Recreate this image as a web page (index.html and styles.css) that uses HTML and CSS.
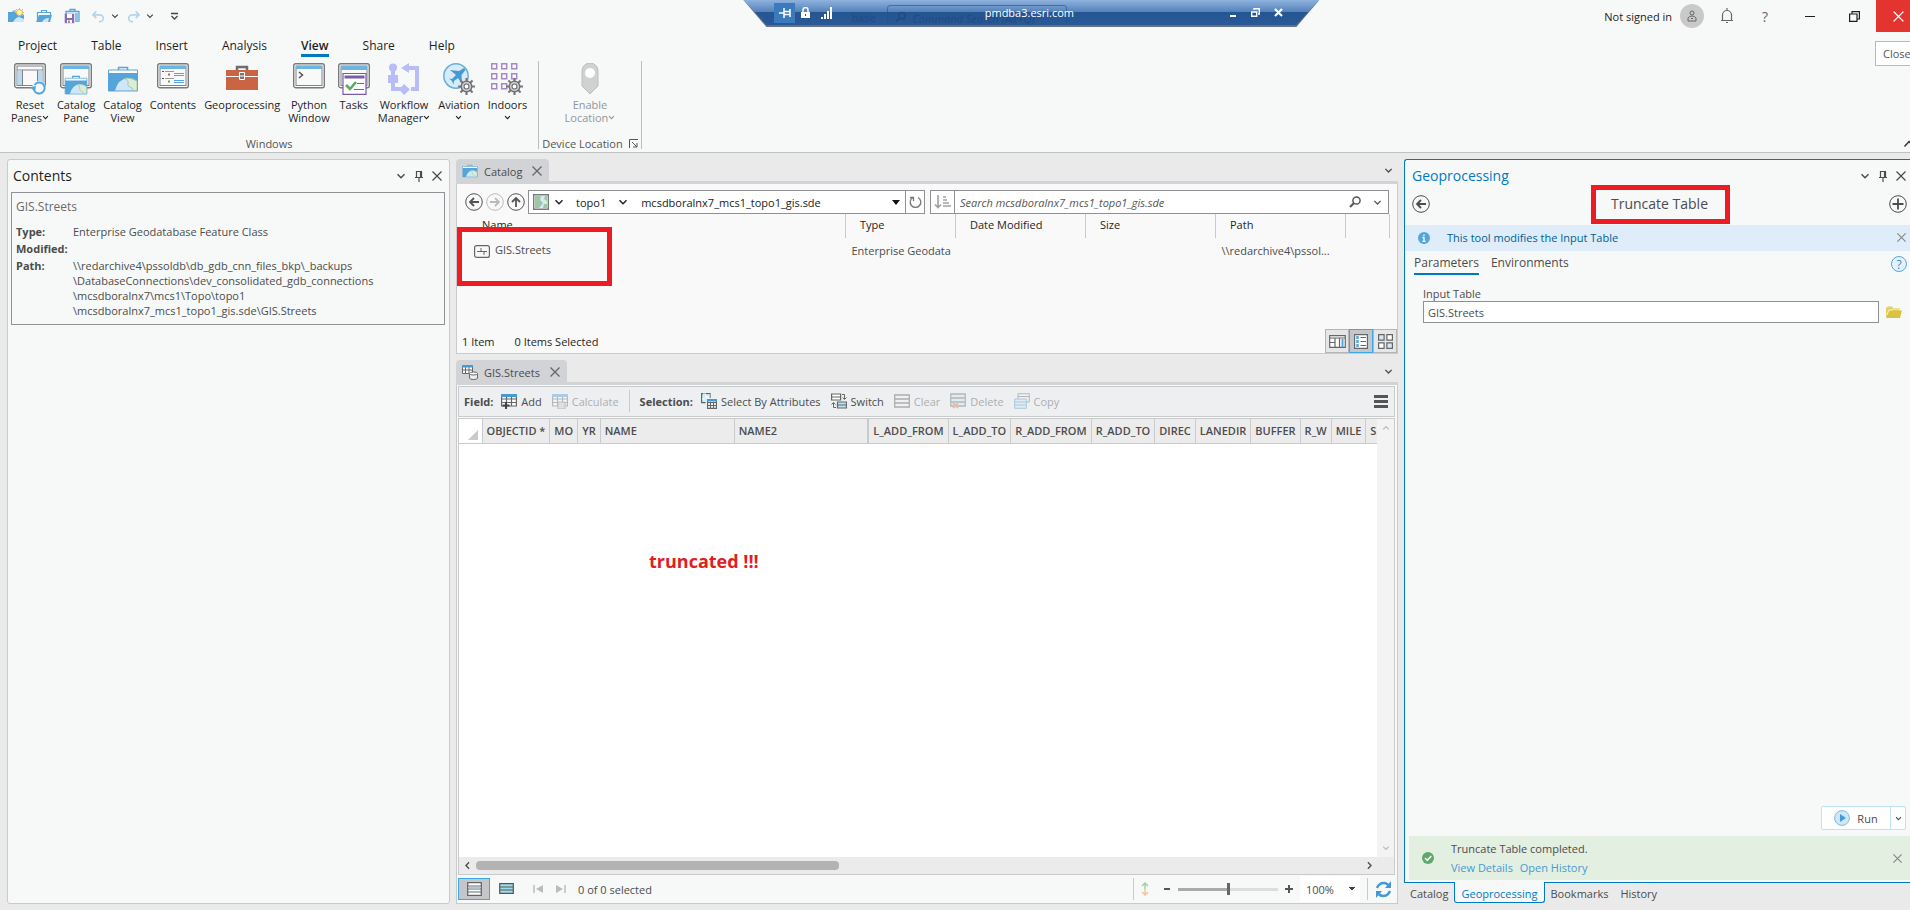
FILE: index.html
```html
<!DOCTYPE html>
<html lang="en">
<head>
    <meta charset="UTF-8">
    <meta name="viewport" content="width=device-width, initial-scale=1.0">
    <title>ArcGIS Pro - Truncate Table</title>
    <link rel="stylesheet" href="styles.css">
</head>
<body>
    <!-- Shared icons -->
    <svg class="sprite" aria-hidden="true">
        <symbol id="chevron" viewBox="0 0 10 10"><path d="M1.5 3.2 5 6.7 8.500 3.200" fill="none" stroke="currentColor" stroke-width="1.5"/></symbol>
        <symbol id="cross" viewBox="0 0 12 12"><path d="M1.500 1.500 10.500 10.500M10.500 1.500 1.500 10.500" fill="none" stroke="currentColor" stroke-width="1.300"/></symbol>
        <symbol id="pin" viewBox="0 0 12 12"><path d="M3.500 7V1.500h5V7M2 7.500h8M6 7.500V12M7.500 1.500V7" fill="none" stroke="currentColor" stroke-width="1.200"/></symbol>
        <symbol id="circle-left" viewBox="0 0 18 18"><circle cx="9" cy="9" r="8.300" fill="none" stroke="currentColor"/><path d="M14 9H5M9 5 5 9l4 4" fill="none" stroke="currentColor" stroke-width="1.800"/></symbol>
        <symbol id="case" viewBox="0 0 32 26"><path d="M11.500 4V1.500h9V4" fill="none" stroke="#56a5da" stroke-width="1.500"/><path d="M1.500 4h29v21h-29z" fill="#56a5da" stroke="#56a5da"/><path d="M2 4.500h28V7H2z" fill="#fff"/><path d="M8 24.500Q11 13 21 12q5 0 9 3v9.500z" fill="#cfe6f6"/><path d="M17 12.500q5-1.500 13 2.500v9.500h-4q0-3-3-3.500t-2-4-4-4.500z" fill="#dcecd8" stroke="#8cc298" stroke-width=".7"/></symbol>
        <symbol id="screen" viewBox="0 0 32 26"><rect x=".7" y=".7" width="30.600" height="24" rx="2" fill="#fff" stroke="#77797c" stroke-width="1.400"/><rect x="3" y="3" width="26" height="19.500" fill="#f9f9fa" stroke="#808285"/></symbol>
        <symbol id="gear" viewBox="0 0 16 16"><path d="M8 0v16M0 8h16M2.300 2.300l11.400 11.400M13.700 2.300 2.300 13.700" stroke="#77787b" stroke-width="2"/><circle cx="8" cy="8" r="5" fill="#c9cacc" stroke="#6d6e71" stroke-width="1.200"/><circle cx="8" cy="8" r="2.300" fill="#fff" stroke="#6d6e71"/></symbol>
        <symbol id="rows" viewBox="0 0 16 14"><path d="M.7 1h14.600v12H.7zM.7 5h14.600M.7 9h14.600" fill="#f4f5f6" stroke="currentColor" stroke-width="1.300"/></symbol>
    </svg>

    <header class="ribbon">
        <div class="title-bar">
            <nav class="quick-access" aria-label="Quick access">
                <button aria-label="New project"><svg width="16" height="16" viewBox="0 0 16 16"><path d="M5 5V3h3" fill="none" stroke="#56a5da"/><path d="M0 4h12l4 3v7H0z" fill="#56a5da"/><path d="M5 14q3-5 6-5l5 2v3z" fill="#cfe6f6"/><circle cx="11.500" cy="4.500" r="3" fill="#fdf3b0" stroke="#e2bf3c"/><path d="M11.500 0v2M11.500 7v2M7 4.500h2M14 4.500h2M8 1l1.500 1.500M15 1l-1.500 1.500M15 8l-1.500-1.500" stroke="#e2bf3c"/></svg></button>
                <button aria-label="Open project"><svg width="16" height="16" viewBox="0 0 16 16"><path d="M5.500 4V2.500h5V4M1.500 12V4.500h13V8" fill="none" stroke="#56a5da" stroke-width="1.200"/><path d="M3 7h13l-2 7H0z" fill="#56a5da"/><path d="M6 14q2-4 7-4l-1 4z" fill="#cfe6f6"/></svg></button>
                <button aria-label="Save project"><svg width="16" height="16" viewBox="0 0 16 16"><path d="M6 3V1.500h5V3M2 6V3.500h13V13h-4" fill="none" stroke="#56a5da" stroke-width="1.300"/><path d="M11 5h5v8h-5z" fill="#8bc2e6"/><rect x=".7" y="5.700" width="9.500" height="9.500" fill="#8c6bb5"/><path d="M3 6h5v4H3zM3 12h5v3H3z" fill="#fff"/><path d="M5 12.500v2.500" stroke="#333"/></svg></button>
                <button class="faded" aria-label="Undo"><svg width="13" height="13" viewBox="0 0 15 14"><path d="M5 1 1 5l4 4M1.500 5H9a4 4 0 0 1 0 8H8" fill="none" stroke="currentColor" stroke-width="2"/></svg></button>
                <button class="narrow" aria-label="Undo list"><svg width="8" height="8"><use href="#chevron"/></svg></button>
                <button class="faded" aria-label="Redo"><svg width="13" height="13" viewBox="0 0 15 14"><path d="m10 1 4 4-4 4M13.500 5H6a4 4 0 0 0 0 8h1" fill="none" stroke="currentColor" stroke-width="2"/></svg></button>
                <button class="narrow" aria-label="Redo list"><svg width="8" height="8"><use href="#chevron"/></svg></button>
                <button aria-label="Customize quick access"><svg width="9" height="9" viewBox="0 0 9 9"><path d="M1 1.500h7M1.500 4l3 3 3-3" fill="none" stroke="currentColor" stroke-width="1.300"/></svg></button>
            </nav>
            <div class="account">
                <span>Not signed in</span>
                <span class="avatar"><svg width="10" height="12" viewBox="0 0 10 12"><circle cx="5" cy="3" r="2" fill="none" stroke="#666"/><path d="M1 11V8q1-2 4-2t4 2v3zM4 8.500h2" fill="none" stroke="#666"/></svg></span>
                <button aria-label="Notifications"><svg width="14" height="16" viewBox="0 0 14 16"><path d="M1 12.500h12M2.500 12V7a4.500 4.500 0 0 1 9 0v5M6 14.500h2M7 0v2.500" fill="none" stroke="currentColor" stroke-width="1.200"/></svg></button>
                <button class="help-mark" aria-label="Help">?</button>
            </div>
            <div class="window-buttons">
                <button aria-label="Minimize"><svg width="10" height="10" viewBox="0 0 10 10"><path d="M0 5.500h10" stroke="currentColor"/></svg></button>
                <button aria-label="Restore"><svg width="11" height="11" viewBox="0 0 11 11"><path d="M.6 3h7.400v7.400H.6zM3 3V.6h7.400V8H8" fill="none" stroke="currentColor" stroke-width="1.200"/></svg></button>
                <button class="window-close" aria-label="Close"><svg width="13" height="13"><use href="#cross"/></svg></button>
            </div>
        </div>
        <nav class="tabs" aria-label="Ribbon">
            <a href="#">Project</a>
            <a href="#">Table</a>
            <a href="#">Insert</a>
            <a href="#">Analysis</a>
            <a href="#" class="active">View</a>
            <a href="#">Share</a>
            <a href="#">Help</a>
        </nav>
        <div class="tools">
            <section class="tool-group">
                <div class="tool-buttons">
                    <button class="tool"><svg viewBox="0 0 32 32"><use href="#screen" width="32" height="26"/><path d="M3 7h26M8.500 7v15M23.500 7v15" stroke="#808285"/><path d="M3.500 7.500H8V22H3.500zM24 7.500h4.500V22H24z" fill="#b8d9ef"/><circle cx="25" cy="25" r="7" fill="#f7f9f9"/><path d="M20 27a5.500 5.500 0 1 0 .5-5" fill="none" stroke="#56a5da" stroke-width="2"/><path d="m16 24 6-1-1 6z" fill="#56a5da"/></svg>Reset<span>Panes<svg class="caret"><use href="#chevron"/></svg></span></button>
                    <button class="tool"><svg viewBox="0 0 32 32"><use href="#screen" width="32" height="26"/><path d="M3 3h26v3H3z" fill="#6cb5e3"/><use href="#case" x="4" y="12" width="24" height="20"/></svg>Catalog<span>Pane</span></button>
                    <button class="tool"><svg viewBox="0 0 32 32"><use href="#case" y="3" width="32" height="26"/></svg>Catalog<span>View</span></button>
                    <button class="tool"><svg viewBox="0 0 32 32"><use href="#screen" width="32" height="26"/><path d="M3 3h26v3H3z" fill="#6cb5e3"/><path d="M8 8.500h9M8 15.500h9" stroke="#999"/><path d="M17 10.500h10M17 12.500h10M17 17.500h10M17 19.500h10" stroke="#56a5da"/><path d="M11 11.500h2" stroke="#d2603c" stroke-width="2"/><path d="M11 18.500h2" stroke="#59a95d" stroke-width="2"/><path d="M5 8.500h2M5 15.500h2" stroke="#555"/></svg>Contents</button>
                    <button class="tool"><svg viewBox="0 0 32 32"><path d="M11 7V4h10v3" fill="none" stroke="#6d6e71" stroke-width="2.500"/><path d="M0 7h32v20H0z" fill="#cb6443"/><path d="M0 13.500h32" stroke="#fff"/><path d="M13.500 9.500h5v7h-5z" fill="#77787b" stroke="#fff"/><path d="M14 13h4" stroke="#fff"/></svg>Geoprocessing</button>
                    <button class="tool"><svg viewBox="0 0 32 32"><use href="#screen" width="32" height="26"/><path d="M3 3h26v3H3z" fill="#6cb5e3"/><path d="m6 9 3.500 3L6 15" fill="none" stroke="#555" stroke-width="1.500"/></svg>Python<span>Window</span></button>
                    <button class="tool"><svg viewBox="0 0 32 32"><use href="#screen" width="32" height="26"/><path d="M3 3h26v4H3z" fill="#6cb5e3"/><path d="M5 10.500h23v20.800H5z" fill="#fff" stroke="#7a5ba6" stroke-width="1.200"/><path d="M6.500 12.500h20v3h-20z" fill="#7a5ba6"/><path d="m8 22 4 4 6-7" fill="none" stroke="#59a95d" stroke-width="2.500"/><path d="M19 20.500h7M16 26.500h10" stroke="#7a5ba6"/></svg>Tasks</button>
                    <button class="tool"><svg viewBox="0 0 32 32"><circle cx="5" cy="4.500" r="4" fill="#b9bdf7"/><path d="M5 5v21h12M20 5h9v21h-6" fill="none" stroke="#b9bdf7" stroke-width="4"/><path d="M0 12h10v8H0zM13 5l8-5v10zM16 21l6 5.500-6 5.500-5-5.500z" fill="#b9bdf7"/></svg>Workflow<span>Manager<svg class="caret"><use href="#chevron"/></svg></span></button>
                    <button class="tool"><svg viewBox="0 0 32 32"><circle cx="13" cy="13" r="12.200" fill="#d6eaf8" stroke="#67aedd" stroke-width="1.500"/><path d="m21 5-5 3-9-1 6 5-4 4-3-.5 3 2.500 1.500 3.500.5-3.500 4-3 4 6-.500-9 4-5z" fill="#469ad3"/><use href="#gear" x="15" y="15" width="17" height="17"/></svg>Aviation<span><svg class="caret"><use href="#chevron"/></svg></span></button>
                    <button class="tool"><svg viewBox="0 0 32 32"><path d="M.7.7h5v5h-5zM10.700.7h5v5h-5zM20.700.7h5v5h-5zM.7 10.700h5v5h-5zM10.700 10.700h5v5h-5zM20.700 10.700h5v5h-5zM.7 20.700h5v5h-5zM10.700 20.700h5v5h-5z" fill="#faf7fd" stroke="#a68ac6" stroke-width="1.500"/><use href="#gear" x="15" y="15" width="17" height="17"/></svg>Indoors<span><svg class="caret"><use href="#chevron"/></svg></span></button>
                </div>
                <div class="group-label">Windows</div>
            </section>
            <section class="tool-group device">
                <div class="tool-buttons">
                    <button class="tool" disabled><svg viewBox="0 0 32 32"><path d="M8 8a8 8 0 0 1 16 0v15l-8 8-8-8z" fill="#d0d1d1" stroke="#bcbdbd"/><circle cx="16" cy="10" r="5" fill="#fff"/></svg>Enable<span>Location<svg class="caret"><use href="#chevron"/></svg></span></button>
                </div>
                <div class="group-label">Device Location <svg width="9" height="9" viewBox="0 0 9 9"><path d="M.5 9V.5H9M3 3l5 5M8 4v4H4" fill="none" stroke="#555"/></svg></div>
            </section>
            <button class="collapse" aria-label="Collapse ribbon"><svg width="12" height="12" viewBox="0 0 12 12"><path d="m1.500 8.500 4.500-5 4.500 5" fill="none" stroke="#333" stroke-width="1.500"/></svg></button>
        </div>
        <div class="close-tip">Close</div>
    </header>

    <!-- Remote desktop connection bar -->
    <div class="remote-bar">
        <div class="remote-inner">
            <span class="ghost-name">base</span>
            <span class="ghost-search"><svg width="11" height="12" viewBox="0 0 12 12"><circle cx="7.500" cy="4.500" r="3.500" fill="none" stroke="currentColor" stroke-width="1.500"/><path d="M5 7 1 11" stroke="currentColor" stroke-width="2"/></svg> Command Search (Alt+Q)</span>
            <button class="pinned" aria-label="Pin bar"><svg width="12" height="10" viewBox="0 0 12 10"><path d="M0 5h5M5 0v10M5 3.500h6M5 6.500h6M11 1v8" stroke="#fff" stroke-width="1.500"/></svg></button>
            <button aria-label="Secure connection"><svg width="9" height="11" viewBox="0 0 9 11"><path d="M2 5V3a2.500 2.500 0 0 1 5 0v2" fill="none" stroke="#fff" stroke-width="1.500"/><path d="M0 5h9v6H0z" fill="#fff"/><path d="M4.500 7v2" stroke="#295894"/></svg></button>
            <button aria-label="Signal"><svg width="11" height="12" viewBox="0 0 11 12"><path d="M1 12v-2M4 12V7M7 12V4M10 12V0" stroke="#fff" stroke-width="2"/></svg></button>
            <span class="host">pmdba3.esri.com</span>
            <button aria-label="Minimize session"><svg width="8" height="9" viewBox="0 0 8 9"><path d="M1 8h6" stroke="#fff" stroke-width="2"/></svg></button>
            <button aria-label="Restore session"><svg width="9" height="9" viewBox="0 0 9 9"><path d="M.7 4h5v4.300h-5zM3 2V.8h5.300V6H7" fill="none" stroke="#fff" stroke-width="1.400"/></svg></button>
            <button aria-label="Close session"><svg width="9" height="9" viewBox="0 0 9 9"><path d="m1 1 7 7M8 1 1 8" stroke="#fff" stroke-width="2.200"/></svg></button>
        </div>
    </div>

    <main class="workspace">
        <section class="pane contents-pane">
            <div class="pane-header">
                <h2>Contents</h2>
                <button aria-label="Contents menu"><svg width="10" height="10"><use href="#chevron"/></svg></button>
                <button aria-label="Auto hide"><svg width="12" height="12"><use href="#pin"/></svg></button>
                <button aria-label="Close Contents"><svg width="12" height="12"><use href="#cross"/></svg></button>
            </div>
            <div class="details">
                <h3>GIS.Streets</h3>
                <dl>
                    <dt>Type:</dt>
                    <dd>Enterprise Geodatabase Feature Class</dd>
                    <dt>Modified:</dt>
                    <dd></dd>
                    <dt>Path:</dt>
                    <dd>\\redarchive4\pssoldb\db_gdb_cnn_files_bkp\_backups<br>\DatabaseConnections\dev_consolidated_gdb_connections<br>\mcsdboralnx7\mcs1\Topo\topo1<br>\mcsdboralnx7_mcs1_topo1_gis.sde\GIS.Streets</dd>
                </dl>
            </div>
        </section>

        <div class="center">
            <section class="view catalog-view">
                <div class="view-tabs">
                    <div class="view-tab"><svg width="16" height="14"><use href="#case"/></svg>Catalog<button aria-label="Close Catalog"><svg width="12" height="12"><use href="#cross"/></svg></button></div>
                    <button class="view-menu" aria-label="View list"><svg width="9" height="9"><use href="#chevron"/></svg></button>
                </div>
                <div class="view-body">
                    <div class="location-bar">
                        <button aria-label="Back"><svg width="18" height="18"><use href="#circle-left"/></svg></button>
                        <button class="off" aria-label="Forward"><svg width="18" height="18" viewBox="0 0 18 18"><use href="#circle-left" transform="rotate(180 9 9)"/></svg></button>
                        <button aria-label="Up"><svg width="18" height="18" viewBox="0 0 18 18"><use href="#circle-left" transform="rotate(90 9 9)"/></svg></button>
                        <div class="address">
                            <svg width="16" height="16" viewBox="0 0 16 16"><path d="M.7.7h14.600v14.600H.7z" fill="#fff" stroke="#77797c" stroke-width="1.400"/><path d="M2 2h12v12H2z" fill="#d9e8f4"/><path d="M2 2h6l-1 4 3 3-4 5H2zM14 2v5l-3-2 1-3zM11 10h3v4h-4z" fill="#9bc8a3"/></svg>
                            <button class="crumb-arrow" aria-label="Folders"><svg width="10" height="10"><use href="#chevron"/></svg></button>
                            <button>topo1</button>
                            <button class="crumb-arrow" aria-label="Subfolders"><svg width="10" height="10"><use href="#chevron"/></svg></button>
                            <button class="crumb-last">mcsdboralnx7_mcs1_topo1_gis.sde</button>
                            <button aria-label="Recent locations"><svg width="8" height="5" viewBox="0 0 8 5"><path d="M0 0h8L4 5z" fill="#111"/></svg></button>
                            <button class="refresh" aria-label="Refresh"><svg width="13" height="13" viewBox="0 0 13 13"><path d="M4 1.500a5.300 5.300 0 1 0 5 0M1 1.500h3.500V5" fill="none" stroke="#777" stroke-width="1.300"/></svg></button>
                        </div>
                        <div class="search">
                            <button class="sort" aria-label="Sort"><svg width="17" height="14" viewBox="0 0 17 14"><path d="M4 0v12M1 9.500l3 3 3-3M9 2h3M9 5h4M9 8h6M9 11h8" fill="none" stroke="#a0a1a3" stroke-width="1.600"/></svg></button>
                            <input type="text" aria-label="Search" placeholder="Search mcsdboralnx7_mcs1_topo1_gis.sde">
                            <button aria-label="Run search"><svg width="12" height="12" viewBox="0 0 12 12"><circle cx="7.500" cy="4.500" r="3.600" fill="none" stroke="#555" stroke-width="1.500"/><path d="M5 7 1 11" stroke="#555" stroke-width="2"/></svg></button>
                            <button aria-label="Search options"><svg width="9" height="9"><use href="#chevron"/></svg></button>
                        </div>
                    </div>
                    <table class="items">
                        <thead>
                            <tr><th class="name">Name</th><th class="type">Type</th><th>Date Modified</th><th>Size</th><th>Path</th><th class="last"></th></tr>
                        </thead>
                        <tbody>
                            <tr>
                                <td class="name"><svg width="16" height="13" viewBox="0 0 16 13"><rect x=".6" y=".6" width="14.800" height="11.800" rx="2" fill="none" stroke="#666" stroke-width="1.200"/><path d="M3 6.500h10M7 3v3.500M10 6.500V10" stroke="#666"/></svg>GIS.Streets</td>
                                <td>Enterprise Geodata</td><td></td><td></td><td>\\redarchive4\pssol...</td><td></td>
                            </tr>
                        </tbody>
                    </table>
                    <div class="view-footer">
                        <span>1 Item</span>
                        <span>0 Items Selected</span>
                        <div class="modes">
                            <button aria-label="Columns"><svg width="17" height="13" viewBox="0 0 17 13"><path d="M.7.7h15.600v11.600H.7zM.7 3h15.600M.7 7.500h5M6 3v9M10.500 3v9" fill="#fff" stroke="#666" stroke-width="1.200"/><path d="M12.500 4h2v8h-2z" fill="#56a5da"/></svg></button>
                            <button class="on" aria-label="Details"><svg width="14" height="15" viewBox="0 0 14 15"><path d="M.6.600h12.800v13.800H.6z" fill="#fff" stroke="#666" stroke-width="1.200"/><path d="M3.500 2v11" stroke="#56a5da" stroke-width="2.500" stroke-dasharray="3 1"/><path d="M6.500 3.500H12M6.500 7.500H12M6.500 11.500H12" stroke="#666"/></svg></button>
                            <button aria-label="Tiles"><svg width="15" height="15" viewBox="0 0 15 15"><path d="M.6.6h5.500v5.500H.6zM8.900 8.900h5.500v5.500H8.900z" fill="#d3e9f7" stroke="#666" stroke-width="1.200"/><path d="M8.900.6h5.500v5.500H8.900zM.6 8.900h5.500v5.500H.6z" fill="#fff" stroke="#666" stroke-width="1.200"/></svg></button>
                        </div>
                    </div>
                    <div class="mark mark-item"></div>
                </div>
            </section>

            <section class="view table-view">
                <div class="view-tabs">
                    <div class="view-tab"><svg width="16" height="16" viewBox="0 0 16 16"><path d="M.5 1.500h10v8H.5zM.5 6h10M3.500 3v6M7 3v6" fill="#fff" stroke="#666"/><path d="M0 1h11v2.500H0z" fill="#469ad3"/><path d="M7.500 9v5a4 1.500 0 0 0 8 0V9" fill="#eee" stroke="#666"/><ellipse cx="11.500" cy="9.500" rx="4" ry="1.500" fill="#fff" stroke="#666"/></svg>GIS.Streets<button aria-label="Close GIS.Streets"><svg width="12" height="12"><use href="#cross"/></svg></button></div>
                    <button class="view-menu" aria-label="Table list"><svg width="9" height="9"><use href="#chevron"/></svg></button>
                </div>
                <div class="view-body">
                    <div class="table-tools">
                        <b>Field:</b>
                        <button><svg width="16" height="16" viewBox="0 0 16 16"><path d="M.6 1.500h14.800V13H.6zM.6 6h14.800M.6 9.500h14.800M5.500 4v9M10.500 4v9" fill="#fff" stroke="#666" stroke-width="1.200"/><path d="M0 1h16v3H0z" fill="#469ad3"/><path d="M5 9v7M1.500 12.500h7" stroke="#444" stroke-width="2"/></svg>Add</button>
                        <button disabled><svg width="16" height="16" viewBox="0 0 16 16"><path d="M.6 1.500h14.800V13H.6zM.6 6h14.800M.6 9.500h14.800M5.500 4v9M10.500 4v9" fill="#fff" stroke="#666" stroke-width="1.200"/><path d="M0 1h16v3H0z" fill="#469ad3"/><path d="M6 9h7v7H6z" fill="#ccc" stroke="#777"/></svg>Calculate</button>
                        <span class="divider"></span>
                        <b>Selection:</b>
                        <button><svg width="16" height="16" viewBox="0 0 16 16"><path d="M9 5V.6H.6v9h4" fill="#cdeef9" stroke="#5c6670" stroke-width="1.200"/><path d="M2 1h3v4h3V1M1 6h3" fill="none" stroke="#fff"/><path d="M6.600 6.600h8.800v8.800H6.600zM6.600 9.500h8.800M6.600 12.500h8.800M9.500 9v6M12.500 9v6" fill="#fff" stroke="#666" stroke-width="1.200"/><path d="M6 6h10v2.500H6z" fill="#469ad3"/></svg>Select By Attributes</button>
                        <button><svg width="16" height="16" viewBox="0 0 16 16"><path d="M.6 1h9v6h-9zM.6 4h9" fill="#fff" stroke="#666" stroke-width="1.200"/><path d="M6.500 9h9v6h-9zM6.500 12h9" fill="#b7e4f4" stroke="#666" stroke-width="1.200"/><path d="M11 1.500h2.500V6M11.500 4.500l2 2 2-2M5 14.500H2.500V10M.5 11.500l2-2 2 2" fill="none" stroke="#666"/></svg>Switch</button>
                        <button disabled><svg width="16" height="14"><use href="#rows"/></svg>Clear</button>
                        <button disabled><svg width="16" height="16" viewBox="0 0 16 16"><path d="M.7 1h14.600v12H.7zM.7 5h14.600M.7 9h14.600" fill="#cbe9f5" stroke="#666" stroke-width="1.300"/><path d="m3 10 5 5M8 10l-5 5" stroke="#e0703c" stroke-width="1.800"/></svg>Delete</button>
                        <button disabled><svg width="16" height="16" viewBox="0 0 16 16"><path d="M4 .7h11.300V9H4zM4 3.500h11.300" fill="#e6f5fa" stroke="#666"/><path d="M.7 6h11.600v9.300H.7zM.7 9h11.600M.7 12h11.600" fill="#cbe9f5" stroke="#4a8fb8"/></svg>Copy</button>
                        <button class="burger" aria-label="Table menu"><svg width="14" height="13" viewBox="0 0 14 13"><path d="M0 1.500h14M0 6.500h14M0 11.500h14" stroke="#555" stroke-width="3"/></svg></button>
                    </div>
                    <div class="grid-area">
                        <div class="grid-scroll">
                            <table class="attributes">
                                <thead>
                                    <tr>
                                        <th class="corner"><svg width="10" height="10" viewBox="0 0 10 10"><path d="M10 0v10H0z" fill="#c9cacc"/></svg></th>
                                        <th>OBJECTID *</th><th>MO</th><th>YR</th><th class="wide">NAME</th><th class="wide frozen">NAME2</th><th>L_ADD_FROM</th><th>L_ADD_TO</th><th>R_ADD_FROM</th><th>R_ADD_TO</th><th>DIREC</th><th>LANEDIR</th><th>BUFFER</th><th>R_W</th><th>MILE</th><th>S</th>
                                    </tr>
                                </thead>
                            </table>
                            <p class="note">truncated !!!</p>
                        </div>
                        <div class="scroll-y">
                            <button aria-label="Scroll up"><svg width="8" height="8" viewBox="0 0 10 10"><use href="#chevron" transform="rotate(180 5 5)"/></svg></button>
                            <button aria-label="Scroll down"><svg width="8" height="8"><use href="#chevron"/></svg></button>
                        </div>
                    </div>
                    <div class="scroll-x">
                        <button aria-label="Scroll left"><svg width="9" height="9" viewBox="0 0 10 10"><use href="#chevron" transform="rotate(90 5 5)"/></svg></button>
                        <div class="track"><div class="thumb"></div></div>
                        <button aria-label="Scroll right"><svg width="9" height="9" viewBox="0 0 10 10"><use href="#chevron" transform="rotate(270 5 5)"/></svg></button>
                    </div>
                    <div class="table-status">
                        <button class="show on" aria-label="Show all records"><svg width="15" height="14" viewBox="0 0 15 14"><path d="M.7.700h13.600v12.600H.7z" fill="#fff" stroke="#666" stroke-width="1.300"/><path d="M1 4h13M1 7h13M1 10h13" stroke="#666"/><path d="M2 5h11v1.500H2z" fill="#8bd3ee"/></svg></button>
                        <button class="show" aria-label="Show selected records"><svg width="15" height="12" viewBox="0 0 15 12"><path d="M.7.700h13.600v9.600H.7zM1 4h13M1 7h13" fill="#9fdcf0" stroke="#555" stroke-width="1.200"/></svg></button>
                        <button class="step" aria-label="First record"><svg width="10" height="8" viewBox="0 0 10 8"><path d="M1 0v8" stroke="#bbb" stroke-width="1.500"/><path d="M10 0v8L3 4z" fill="#bbb"/></svg></button>
                        <button class="step" aria-label="Last record"><svg width="10" height="8" viewBox="0 0 10 8"><path d="M9 0v8" stroke="#bbb" stroke-width="1.500"/><path d="M0 0v8l7-4z" fill="#bbb"/></svg></button>
                        <span>0 of 0 selected</span>
                        <div class="zoom">
                            <span class="divider"></span>
                            <svg width="8" height="14" viewBox="0 0 8 14"><path d="M4 1v6M1 4l3-3 3 3" fill="none" stroke="#a5d0ac" stroke-width="1.500"/><path d="M4 7v6M1 10l3 3 3-3" fill="none" stroke="#f3c796" stroke-width="1.500"/></svg>
                            <button aria-label="Zoom out"><svg width="8" height="8" viewBox="0 0 8 8"><path d="M1 4h6" stroke="#555" stroke-width="2"/></svg></button>
                            <input type="range" min="0" max="100" value="50" aria-label="Zoom">
                            <button aria-label="Zoom in"><svg width="8" height="8" viewBox="0 0 8 8"><path d="M0 4h8M4 0v8" stroke="#555" stroke-width="2"/></svg></button>
                            <select aria-label="Zoom level"><option>100%</option></select>
                            <span class="divider"></span>
                            <button aria-label="Reload"><svg width="17" height="17" viewBox="0 0 17 17"><path d="M2 7q2-5 7-5 3 0 5 3M15 10q-2 5-7 5-3 0-5-3" fill="none" stroke="#469ad3" stroke-width="2.500"/><path d="M16 0v7h-6zM1 17v-7h6z" fill="#469ad3"/></svg></button>
                        </div>
                    </div>
                </div>
            </section>
        </div>

        <section class="geo">
            <div class="pane geo-pane">
                <div class="pane-header">
                    <h2>Geoprocessing</h2>
                    <button aria-label="Geoprocessing menu"><svg width="10" height="10"><use href="#chevron"/></svg></button>
                    <button aria-label="Auto hide"><svg width="12" height="12"><use href="#pin"/></svg></button>
                    <button aria-label="Close Geoprocessing"><svg width="12" height="12"><use href="#cross"/></svg></button>
                </div>
                <div class="tool-title">
                    <button aria-label="Back to tools"><svg width="18" height="18"><use href="#circle-left"/></svg></button>
                    <h1>Truncate Table<span class="mark mark-title"></span></h1>
                    <button aria-label="Add to model"><svg width="18" height="18" viewBox="0 0 18 18"><circle cx="9" cy="9" r="8.300" fill="none" stroke="currentColor"/><path d="M3.500 9h11M9 3.500v11" stroke="currentColor" stroke-width="1.800"/></svg></button>
                </div>
                <div class="info">
                    <svg width="12" height="12" viewBox="0 0 12 12"><circle cx="6" cy="6" r="6" fill="#56a5da"/><path d="M6 2.500v1.500M6 5v4.500M4.500 5.500H6M4.500 9.300h3" stroke="#fff" stroke-width="1.300"/></svg>
                    <span>This tool modifies the Input Table</span>
                    <button aria-label="Dismiss"><svg width="11" height="11"><use href="#cross"/></svg></button>
                </div>
                <nav class="tool-tabs" aria-label="Tool">
                    <a href="#" class="active">Parameters</a>
                    <a href="#">Environments</a>
                    <button aria-label="Tool help">?</button>
                </nav>
                <form class="params">
                    <label for="input-table">Input Table</label>
                    <div class="field">
                        <input type="text" id="input-table" value="GIS.Streets">
                        <button type="button" aria-label="Browse"><svg width="16" height="12" viewBox="0 0 16 12"><path d="M0 11V2l2-1.500h4L7 2h7v2" fill="#e3d060"/><path d="M2.500 4.500H16L14 12H0z" fill="#d9c344"/><path d="M1 9l2-5h3l1-1h7" fill="none" stroke="#fffbe6" stroke-width=".8"/></svg></button>
                    </div>
                </form>
                <div class="run-row">
                    <button class="run"><svg width="16" height="16" viewBox="0 0 16 16"><circle cx="8" cy="8" r="7.400" fill="#cfe7f6" stroke="#7dbce4"/><path d="m6 4 6 4-6 4z" fill="#469ad3"/></svg>Run</button>
                    <button class="run-menu" aria-label="Run options"><svg width="7" height="7"><use href="#chevron"/></svg></button>
                </div>
                <div class="result">
                    <svg width="12" height="12" viewBox="0 0 12 12"><circle cx="6" cy="6" r="6" fill="#5fa867"/><path d="m3 6 2.300 2.300L9.300 4" fill="none" stroke="#fff" stroke-width="1.600"/></svg>
                    <div>
                        <p>Truncate Table completed.</p>
                        <a href="#">View Details</a>
                        <a href="#">Open History</a>
                    </div>
                    <button aria-label="Dismiss result"><svg width="11" height="11"><use href="#cross"/></svg></button>
                </div>
            </div>
            <nav class="dock-tabs" aria-label="Docked panes">
                <a href="#">Catalog</a>
                <a href="#" class="active">Geoprocessing</a>
                <a href="#">Bookmarks</a>
                <a href="#">History</a>
            </nav>
        </section>
    </main>
</body>
</html>
```
FILE: styles.css
```css
:root {
    --bg: #eaeaea;
    --pane: #f7f9f9;
    --tab: #d2d3d7;
    --border: #c9cacc;
    --line: #8f9194;
    --text: #4c4c4c;
    --blue: #0079c1;
    --mark: #ed1c24;
}

*,
*::before,
*::after {
    margin: 0;
    padding: 0;
    box-sizing: border-box;
}

body {
    display: flex;
    flex-direction: column;
    height: 100vh;
    overflow: hidden;
    position: relative;
    font-family: "Open Sans", "Noto Sans", sans-serif;
    font-size: 11px;
    line-height: 15px;
    color: var(--text);
    background: var(--bg);
}

button,
input,
select {
    font: inherit;
    color: inherit;
    background: none;
    border: 0;
}

button {
    display: flex;
    align-items: center;
    justify-content: center;
    white-space: nowrap;
}

a {
    color: inherit;
    text-decoration: none;
}

svg {
    display: block;
    flex-shrink: 0;
}

.sprite {
    position: absolute;
    width: 0;
    height: 0;
}

/* Ribbon */
.ribbon {
    position: relative;
    flex-shrink: 0;
    background: var(--pane);
    border-bottom: 1px solid #bfc1c3;
    color: #1e1e1e;
}

.title-bar {
    display: flex;
    height: 32px;
    align-items: center;
}

.quick-access {
    display: flex;
    align-items: center;
    gap: 12px;
    padding-left: 8px;
    margin-right: auto;
    color: #444;
}

.quick-access .faded {
    color: #b5d5ec;
    margin-right: -6px;
}

.quick-access .narrow {
    margin-right: -4px;
}

.quick-access button:last-child {
    margin-left: 8px;
}

.account {
    display: flex;
    align-items: center;
    gap: 8px;
    color: #222;
}

.avatar {
    display: flex;
    align-items: center;
    justify-content: center;
    width: 24px;
    height: 24px;
    border-radius: 50%;
    background: #c9c9c9;
}

.account button {
    width: 30px;
    color: #666;
}

.account .help-mark {
    font-size: 14px;
}

.window-buttons {
    display: flex;
    height: 100%;
    overflow: hidden;
    padding-left: 8px;
}

.window-buttons button {
    width: 44px;
}

.window-buttons .window-close {
    width: 34px;
    padding-left: 10px;
    background: #e3342f;
    color: #fff;
}

.close-tip {
    position: absolute;
    right: 0;
    top: 41px;
    width: 35px;
    height: 25px;
    padding: 4px 0 0 7px;
    overflow: hidden;
    background: #fff;
    border: 1px solid #b8b9bb;
    border-right: 0;
    color: #555;
}

.tabs {
    display: flex;
    gap: 34px;
    padding-left: 18px;
    height: 29px;
    font-size: 12px;
}

.tabs a {
    height: 25px;
    padding-top: 6px;
}

.tabs .active {
    font-weight: 600;
    border-bottom: 3px solid var(--blue);
}

.tools {
    display: flex;
    height: 91px;
}

.tool-group {
    display: flex;
    flex-direction: column;
    padding: 2px 11px 0;
    margin-bottom: 3px;
    border-right: 1px solid #bbbcbe;
}

.tool-buttons {
    display: flex;
    gap: 8px;
    flex: 1;
}

.tool {
    flex-direction: column;
    justify-content: flex-start;
    line-height: 13px;
}

.tool > svg {
    width: 32px;
    height: 32px;
    margin-bottom: 3px;
}

.tool span {
    display: flex;
    align-items: center;
    min-height: 13px;
}

.caret {
    width: 7px;
    height: 7px;
}

.tool:disabled {
    color: #939598;
}

.group-label {
    display: flex;
    justify-content: center;
    align-items: center;
    gap: 6px;
    line-height: 11px;
    color: #555;
}

.device {
    padding: 2px 3px 0;
}

.device .tool-buttons {
    justify-content: center;
}

.collapse {
    align-self: flex-end;
    margin: 0 -5px 2px auto;
}

/* Remote desktop bar */
.remote-bar {
    position: absolute;
    top: 0;
    left: 54%;
    width: 576px;
    height: 27px;
    transform: translateX(-50%);
    background: #65717f;
    clip-path: polygon(0 0, 100% 0, 96% 100%, 4% 100%);
}

.remote-inner {
    display: flex;
    align-items: center;
    height: 25px;
    padding: 0 29px 0 31px;
    color: #fff;
    background: linear-gradient(#8fb2de, #5381b9 48%, #255592 49%, #295996);
    clip-path: polygon(0 0, 100% 0, 96% 100%, 4% 100%);
}

.remote-inner button {
    width: 21px;
    height: 20px;
}

.remote-inner .host ~ button {
    width: 23px;
}

.remote-inner .pinned {
    background: #3b7bbd;
}

.host {
    position: relative;
    margin: 0 auto;
}

.ghost-name,
.ghost-search {
    position: absolute;
    color: #1d4177;
    opacity: 0.6;
}

.ghost-name {
    left: 108px;
    top: 10px;
}

.ghost-search {
    display: flex;
    gap: 6px;
    left: 144px;
    top: 5px;
    width: 180px;
    padding: 5px 7px;
    border: 1px solid #24508c;
    border-radius: 3px;
    font-style: italic;
    white-space: nowrap;
}

/* Workspace */
.workspace {
    flex: 1;
    min-height: 0;
    display: grid;
    grid-template-columns: 443px minmax(0, 1fr) 506px;
    gap: 6px;
    padding: 6px 0 6px 7px;
}

.pane {
    background: var(--pane);
    border: 1px solid var(--border);
    border-radius: 3px;
}

.pane-header {
    display: flex;
    align-items: center;
    height: 32px;
    padding: 0 3px 1px 5px;
}

.pane-header h2 {
    flex: 1;
    font-size: 14px;
    font-weight: 400;
    color: #1e1e1e;
}

.pane-header button {
    width: 18px;
    height: 20px;
}

.details {
    margin: 0 4px 0 3px;
    padding: 5px 4px 6px;
    border: 1px solid var(--line);
}

.details h3 {
    font-size: 12px;
    font-weight: 400;
    line-height: 18px;
    margin-bottom: 8px;
    color: #6a6a6a;
}

.details dl {
    display: grid;
    grid-template-columns: 57px 1fr;
    row-gap: 2px;
}

.details dt {
    font-weight: 700;
}

.center {
    display: flex;
    flex-direction: column;
    gap: 6px;
    min-width: 0;
}

.view {
    display: flex;
    flex-direction: column;
}

.catalog-view {
    height: 195px;
}

.table-view {
    flex: 1;
    min-height: 0;
}

.view-tabs {
    display: flex;
    justify-content: space-between;
    align-items: flex-end;
    height: 25px;
    border-bottom: 3px solid var(--tab);
}

.view-tab {
    display: flex;
    align-items: center;
    gap: 6px;
    height: 22px;
    padding: 2px 6px 0;
    background: var(--tab);
    border-radius: 4px 4px 0 0;
}

.view-tab button {
    margin-left: 3px;
    color: #666;
}

.view-menu {
    padding: 7px 5px 6px;
}

.view-body {
    position: relative;
    flex: 1;
    min-height: 0;
    display: flex;
    flex-direction: column;
    background: #f9f9f9;
    border: 1px solid var(--border);
    border-top: 0;
}

.location-bar {
    display: flex;
    align-items: center;
    gap: 3px;
    padding: 6px 8px 0;
    color: #555;
}

.location-bar .off {
    color: #bbb;
}

.address,
.search {
    display: flex;
    align-items: stretch;
    height: 24px;
    background: #fff;
    border: 1px solid var(--line);
    color: #222;
}

.address {
    width: 397px;
    padding-left: 4px;
}

.address > svg {
    align-self: center;
}

.crumb-arrow {
    width: 20px;
    margin-right: 7px;
}

.address .crumb-arrow ~ .crumb-arrow {
    margin: 0 4px 0 7px;
}

.address .crumb-last {
    flex: 1;
    justify-content: flex-start;
    padding-left: 4px;
}

.address .refresh {
    width: 19px;
    margin-left: 5px;
    border-left: 1px solid var(--line);
}

.search {
    flex: 1;
    margin-left: 2px;
}

.search .sort {
    width: 24px;
    border-right: 1px solid var(--line);
}

.search input {
    flex: 1;
    min-width: 0;
    padding-left: 5px;
    font-style: italic;
}

.search input::placeholder {
    color: #555;
    opacity: 1;
}

.search button {
    width: 22px;
    color: #555;
}

.items {
    width: calc(100% - 7px);
    table-layout: fixed;
    border-collapse: collapse;
}

.items th {
    width: 130px;
    height: 24px;
    padding: 0 0 3px 14px;
    font-weight: 400;
    text-align: left;
    color: #1e1e1e;
    border-right: 1px solid var(--border);
}

.items th.name {
    width: auto;
    padding-left: 25px;
}

.items th.type {
    width: 110px;
}

.items th.last {
    width: 44px;
}

.items td {
    height: 24px;
    padding-left: 6px;
    white-space: nowrap;
}

.items td.name {
    padding-left: 17px;
}

.items td svg {
    display: inline-block;
    vertical-align: middle;
    margin-right: 5px;
}

.view-footer {
    display: flex;
    align-items: center;
    gap: 20px;
    height: 24px;
    margin-top: auto;
    padding-left: 5px;
    color: #1e1e1e;
}

.modes {
    display: flex;
    margin-left: auto;
}

.modes button {
    width: 24px;
    height: 24px;
    background: #e5e6e8;
    border: 1px solid #b4b5b8;
}

.modes .on,
.show.on {
    background: #c5c6c9;
    border: 1px solid #3ba9e8;
}

/* Red annotation boxes */
.mark {
    position: absolute;
    border: 5px solid var(--mark);
}

.mark-item {
    left: 0;
    top: 43px;
    width: 155px;
    height: 59px;
}

.mark-title {
    inset: -9px -22px -10px -20px;
}

/* Attribute table */
.table-tools {
    display: flex;
    align-items: center;
    gap: 10px;
    height: 31px;
    margin: 1px 2px 0 1px;
    padding: 0 6px 1px 5px;
    background: #eeeff1;
    border: 1px solid var(--border);
}

.table-tools b {
    margin-right: -2px;
}

.table-tools button {
    gap: 4px;
}

.table-tools button:disabled {
    opacity: 0.4;
}

.table-tools .burger {
    margin-left: auto;
}

.divider {
    width: 1px;
    height: 22px;
    background: var(--border);
}

.grid-area {
    flex: 1;
    min-height: 0;
    display: flex;
    margin: 1px 2px 0 1px;
    border: 1px solid var(--border);
    border-bottom: 0;
}

.grid-scroll {
    flex: 1;
    min-width: 0;
    overflow: hidden;
    background: #fff;
}

.attributes {
    border-collapse: collapse;
}

.attributes th {
    height: 24px;
    padding: 0 4px;
    font-weight: 600;
    line-height: 14px;
    text-align: left;
    white-space: nowrap;
    background: #ececec;
    border-right: 1px solid var(--border);
    border-bottom: 1px solid var(--border);
}

.attributes .corner {
    min-width: 23px;
    padding: 9px 3px 0 9px;
    background: #fff;
}

.attributes .wide {
    min-width: 134px;
}

.attributes .frozen {
    border-right-width: 2px;
}

.note {
    margin: 105px 0 0 190px;
    font-size: 18px;
    line-height: 24px;
    font-weight: 700;
    color: #e0201f;
}

.scroll-y {
    display: flex;
    flex-direction: column;
    justify-content: space-between;
    align-items: center;
    width: 17px;
    padding: 5px 0;
    background: #f3f3f4;
    color: #b9b9b9;
}

.scroll-x {
    display: flex;
    align-items: center;
    height: 18px;
    margin: 0 2px 0 1px;
    padding: 0 20px 0 4px;
    background: #ebebeb;
    border: 1px solid var(--border);
    border-top: 0;
}

.track {
    flex: 1;
    margin: 0 4px;
}

.thumb {
    width: 41%;
    height: 9px;
    border-radius: 4px;
    background: #b3b3b3;
}

.table-status {
    display: flex;
    align-items: center;
    height: 28px;
    padding: 0 5px 0 1px;
    background: var(--pane);
}

.show {
    width: 32px;
    height: 22px;
}

.step {
    width: 23px;
}

.table-status > span {
    margin-left: 6px;
}

.show + .step {
    margin-left: 4px;
}

.zoom {
    display: flex;
    align-items: center;
    gap: 7px;
    margin-left: auto;
}

.zoom > svg {
    margin-right: 7px;
}

.zoom input {
    width: 100px;
    height: 12px;
    appearance: none;
    background: linear-gradient(to right, #aaa 50%, #ddd 50%) center / 100% 3px no-repeat;
}

.zoom input::-webkit-slider-thumb {
    appearance: none;
    width: 3px;
    height: 12px;
    background: #666;
}

.zoom select {
    width: 60px;
    height: 26px;
    padding-left: 6px;
    appearance: none;
    background: linear-gradient(to bottom right, #444 50%, transparent 50%) 52px 11px / 3px 4px no-repeat, linear-gradient(to bottom left, #444 50%, transparent 50%) 49px 11px / 3px 4px no-repeat, #fff;
}

/* Geoprocessing */
.geo {
    display: flex;
    flex-direction: column;
    min-width: 0;
}

.geo-pane {
    flex: 1;
    display: flex;
    flex-direction: column;
    min-height: 0;
    border-color: var(--blue);
    border-right: 0;
    border-radius: 3px 0 0 0;
}

.geo-pane .pane-header {
    height: 31px;
    padding: 0 0 0 7px;
}

.geo-pane h2 {
    color: var(--blue);
}

.tool-title {
    display: flex;
    align-items: center;
    justify-content: space-between;
    height: 34px;
    padding: 0 3px 8px 7px;
}

.tool-title h1 {
    position: relative;
    font-size: 14px;
    font-weight: 400;
    line-height: 20px;
}

.info {
    display: flex;
    align-items: center;
    height: 26px;
    padding: 0 3px 1px 13px;
    background: #deedf9;
    color: #005e95;
}

.info span {
    flex: 1;
    padding-left: 17px;
}

.info button,
.result > button {
    color: #85888b;
}

.tool-tabs {
    display: flex;
    gap: 12px;
    height: 24px;
    padding: 0 3px 0 9px;
    font-size: 12px;
}

.tool-tabs a {
    padding-top: 4px;
}

.tool-tabs .active {
    border-bottom: 2px solid var(--blue);
}

.tool-tabs button {
    width: 16px;
    height: 16px;
    margin: 5px 0 0 auto;
    border: 1px solid #56a5da;
    border-radius: 50%;
    background: #e4f2fb;
    color: #2b8fce;
}

.params {
    padding: 11px 8px 0 18px;
}

.params label {
    display: block;
}

.field {
    display: flex;
    gap: 7px;
}

.field input {
    flex: 1;
    min-width: 0;
    height: 22px;
    padding-left: 4px;
    background: #fff;
    border: 1px solid var(--line);
}

.run-row {
    display: flex;
    margin: auto 4px 6px auto;
    height: 24px;
    background: #fff;
    border: 1px solid #bfe2f6;
    border-radius: 2px;
}

.run {
    width: 68px;
    gap: 7px;
}

.run-menu {
    width: 15px;
    border-left: 1px solid #bfe2f6;
}

.result {
    display: flex;
    align-items: center;
    gap: 17px;
    height: 44px;
    margin: 0 0 2px 4px;
    padding: 0 7px 0 13px;
    background: #e3efe1;
}

.result > div {
    flex: 1;
}

.result p {
    margin-bottom: 4px;
}

.result a {
    color: #469ad3;
    margin-right: 4px;
}

.dock-tabs {
    display: flex;
    height: 21px;
    padding-left: 0;
}

.dock-tabs a {
    padding: 3px 6px 0;
}

.dock-tabs .active {
    height: 21px;
    margin-top: -1px;
    padding: 4px 6px 0;
    color: var(--blue);
    background: var(--pane);
    border: 1px solid var(--blue);
    border-top: 0;
    border-radius: 0 0 3px 3px;
}
```
